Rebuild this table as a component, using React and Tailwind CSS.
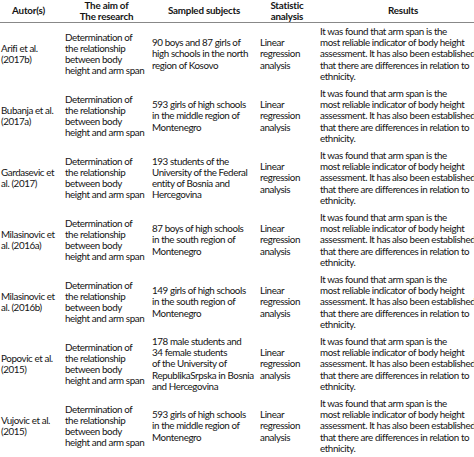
const rows = [
  {
    author: ["Arifi et al.", "(2017b)"],
    subjects: ["90 boys and 87 girls of", "high schools in the north", "region of Kosovo"],
  },
  {
    author: ["Bubanja et al.", "(2017a)"],
    subjects: ["593 girls of high schools", "in the middle region of", "Montenegro"],
  },
  {
    author: ["Gardasevic et", "al. (2017)"],
    subjects: ["193 students of the", "University of the Federal", "entity of Bosnia and", "Hercegovina"],
  },
  {
    author: ["Milasinovic et", "al. (2016a)"],
    subjects: ["87 boys of high schools", "in the south region of", "Montenegro"],
  },
  {
    author: ["Milasinovic et", "al. (2016b)"],
    subjects: ["149 girls of high schools", "in the south region of", "Montenegro"],
  },
  {
    author: ["Popovic et al.", "(2015)"],
    subjects: [
      "178 male students and",
      "34 female students",
      "of the University of",
      "RepublikaSrpska in Bosnia",
      "and Hercegovina",
    ],
  },
  {
    author: ["Vujovic et al.", "(2015)"],
    subjects: ["593 girls of high schools", "in the middle region of", "Montenegro"],
  },
];

const aim = ["Determination of", "the relationship", "between body", "height and arm span"];
const method = ["Linear", "regression", "analysis"];
const results = [
  "It was found that arm span is the",
  "most reliable indicator of body height",
  "assessment. It has also been established",
  "that there are differences in relation to",
  "ethnicity.",
];

function Lines({ items }) {
  return (
    <div className="whitespace-nowrap">
      {items.map((t, i) => (
        <div key={i}>{t}</div>
      ))}
    </div>
  );
}

export default function App() {
  return (
    <div className="w-[474px] h-[457px] overflow-hidden bg-white text-[#141414] text-[9.8px] leading-[11.25px] tracking-[-0.4px] font-['Lato',sans-serif]">
      <div className="w-[490px]">
        <div className="grid grid-cols-[65px_87px_108px_60px_170px] h-[23px] border-b border-[#888888] font-bold leading-[10.5px] tracking-[-0.2px]">
          <div className="flex items-center justify-center pr-[8px] pb-[2px]">Autor(s)</div>
          <div className="flex flex-col items-center justify-center pb-[2px] pr-[4px]">
            <div>The aim of</div>
            <div>The research</div>
          </div>
          <div className="flex items-center justify-center pb-[2px] pr-[4px]">Sampled subjects</div>
          <div className="flex flex-col items-center justify-center pb-[2px] pr-[6px]">
            <div>Statistic</div>
            <div>analysis</div>
          </div>
          <div className="flex items-center justify-center pb-[2px] pr-[4px]">Results</div>
        </div>

        {rows.map((r, i) => (
          <div key={i} className="grid grid-cols-[65px_87px_108px_60px_170px] h-[62px] items-center">
            <div className="pl-[1px]">
              <Lines items={r.author} />
            </div>
            <Lines items={aim} />
            <Lines items={r.subjects} />
            <Lines items={method} />
            <Lines items={results} />
          </div>
        ))}
      </div>
    </div>
  );
}
